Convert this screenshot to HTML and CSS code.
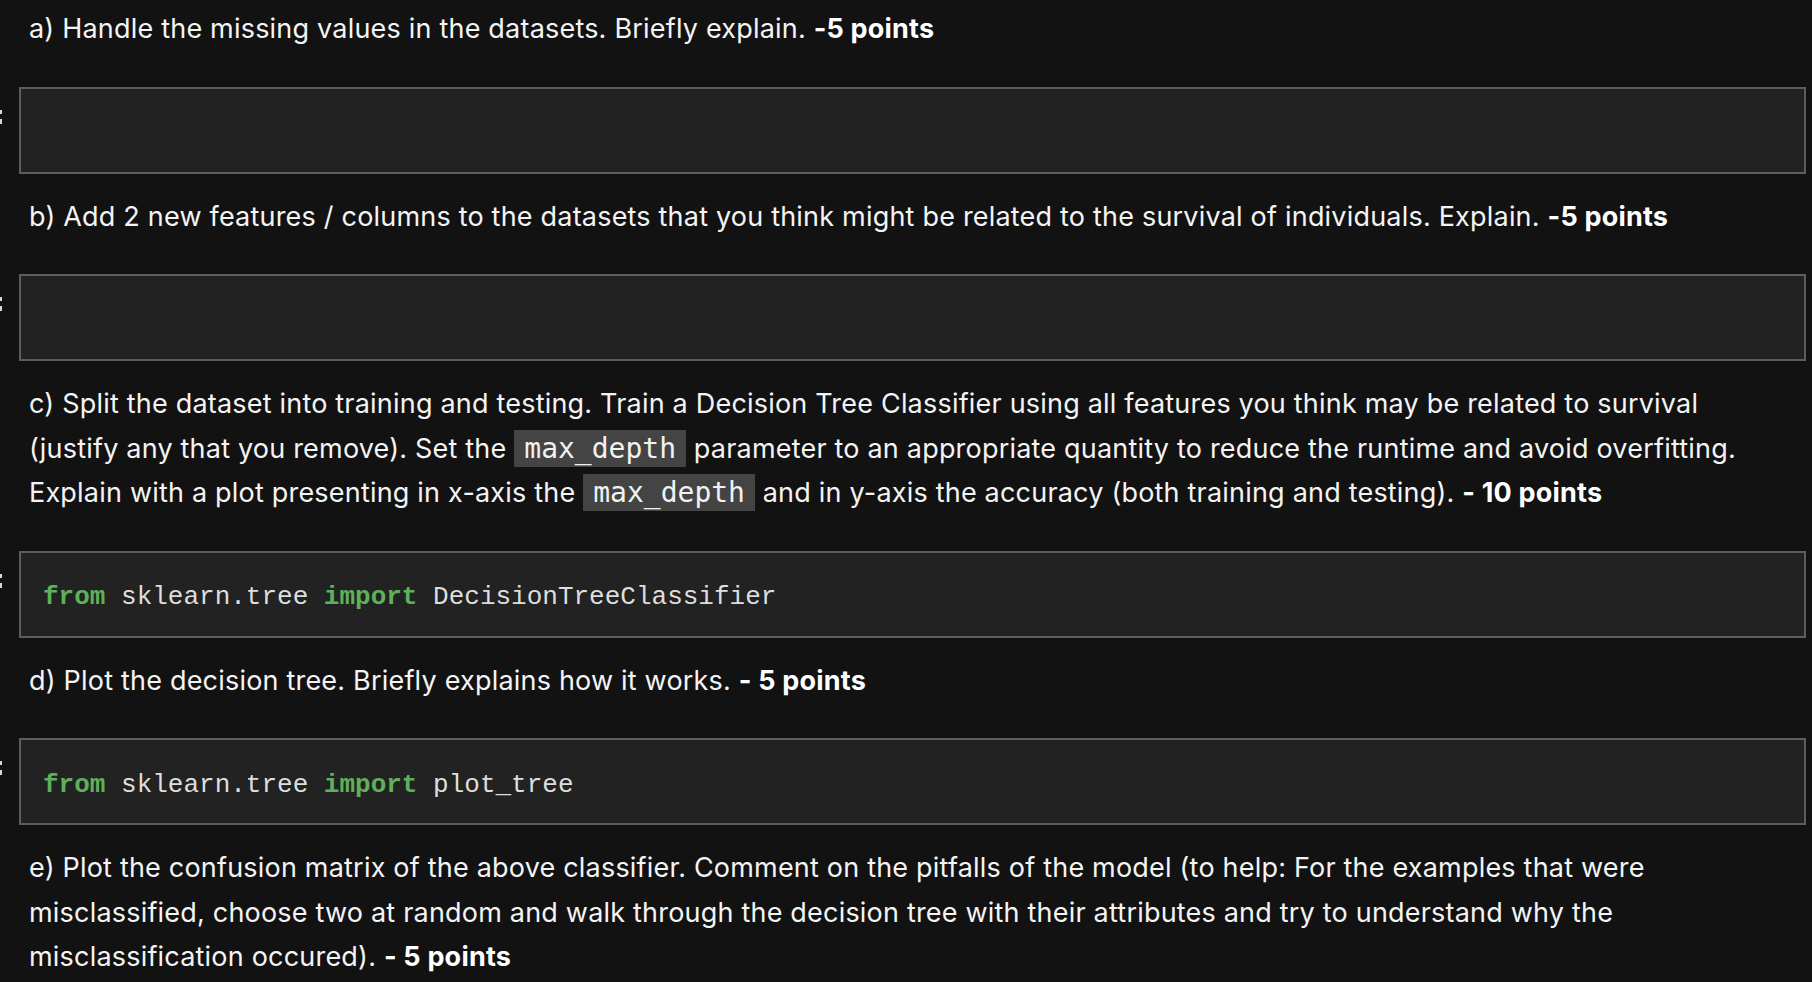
FILE: index.html
```html
<!DOCTYPE html>
<html lang="en">
<head>
<meta charset="utf-8">
<title>Decision Tree Assignment</title>
<link rel="stylesheet" href="styles.css">
</head>
<body>
<main class="notebook">
  <section class="md">
    <p>a) Handle the missing values in the datasets. Briefly explain. <strong>-5 points</strong></p>
  </section>
  <section class="cell">
    <div class="gutter"><span class="mark"></span><span class="mark tall"></span></div>
    <div class="box"></div>
  </section>

  <section class="md">
    <p>b) Add 2 new features / columns to the datasets that you think might be related to the survival of individuals. Explain. <strong>-5 points</strong></p>
  </section>
  <section class="cell">
    <div class="gutter"><span class="mark"></span><span class="mark tall"></span></div>
    <div class="box"></div>
  </section>

  <section class="md">
    <p>c) Split the dataset into training and testing. Train a Decision Tree Classifier using all features you think may be related to survival (justify any that you remove). Set the <code>max_depth</code> parameter to an appropriate quantity to reduce the runtime and avoid overfitting. Explain with a plot presenting in x-axis the <code>max_depth</code> and in y-axis the accuracy (both training and testing). <strong>- 10 points</strong></p>
  </section>
  <section class="cell">
    <div class="gutter"><span class="mark"></span><span class="mark tall"></span></div>
    <div class="box"><pre class="code"><span class="kw">from</span> sklearn.tree <span class="kw">import</span> DecisionTreeClassifier</pre></div>
  </section>

  <section class="md">
    <p>d) Plot the decision tree. Briefly explains how it works. <strong>- 5 points</strong></p>
  </section>
  <section class="cell">
    <div class="gutter"><span class="mark"></span><span class="mark tall"></span></div>
    <div class="box"><pre class="code"><span class="kw">from</span> sklearn.tree <span class="kw">import</span> plot_tree</pre></div>
  </section>

  <section class="md">
    <p>e) Plot the confusion matrix of the above classifier. Comment on the pitfalls of the model (to help: For the examples that were misclassified, choose two at random and walk through the decision tree with their attributes and try to understand why the misclassification occured). <strong>- 5 points</strong></p>
  </section>
</main>
</body>
</html>
```
FILE: styles.css
```css
html, body {
  margin: 0;
  padding: 0;
  background: #121212;
}

body {
  color: #f4f4f4;
  font-family: "Inter", "Helvetica Neue", "Liberation Sans", sans-serif;
  font-size: 27px;
  letter-spacing: 0.2px;
  overflow: hidden;
}

.notebook {
  padding: 7px 6px 0 0;
  display: flex;
  flex-direction: column;
}

.md {
  padding-left: 29px;
  padding-right: 51px;
  margin-bottom: 35px;
}

.md p {
  margin: 0;
  line-height: 44.5px;
}

.md strong {
  font-weight: 700;
  color: #ffffff;
}

.md code {
  font-family: "DejaVu Sans Mono", monospace;
  font-size: 28px;
  letter-spacing: 0;
  background: #444444;
  color: #f2f2f2;
  padding: 2px 10px;
}

.cell {
  display: flex;
  margin-bottom: 21px;
}

.gutter {
  width: 19px;
  flex: none;
  display: flex;
  flex-direction: column;
  padding-top: 23px;
  gap: 5px;
}

.mark {
  display: block;
  width: 2px;
  height: 4px;
  background: #d8d8d8;
}

.mark.tall {
  height: 5px;
}

.box {
  flex: 1;
  height: 87px;
  box-sizing: border-box;
  border: 2px solid #5d5d5d;
  background: #222222;
  display: flex;
  align-items: center;
  padding-left: 22px;
  padding-top: 6px;
}

.code {
  margin: 0;
  font-family: "Liberation Mono", "Courier New", monospace;
  font-size: 26px;
  letter-spacing: 0;
  color: #dedede;
}

.kw {
  color: #5fb05a;
  font-weight: 700;
}
```
